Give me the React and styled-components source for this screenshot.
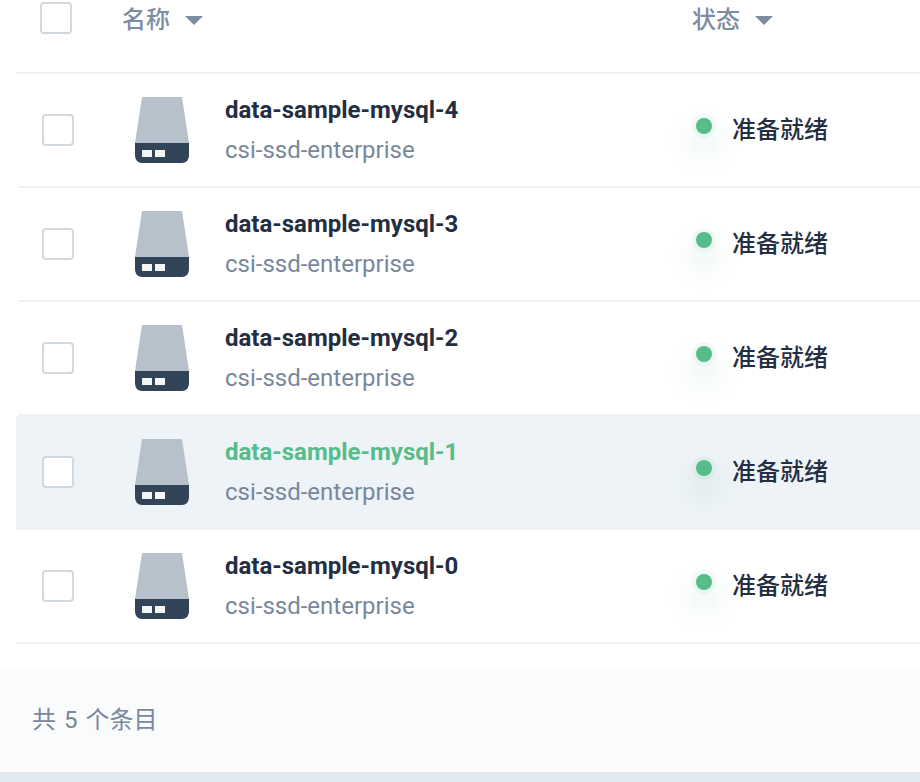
import React from 'react';
import styled, { createGlobalStyle } from 'styled-components';

const GlobalStyle = createGlobalStyle`
  html, body {
    margin: 0;
    padding: 0;
    background: #e3e9f0;
  }
  body {
    font-family: Roboto, "Noto Sans CJK SC", sans-serif;
  }
`;

const Page = styled.div`
  width: 920px;
  height: 782px;
  overflow: hidden;
  background: #e3e9f0;
`;

const Panel = styled.div`
  height: 772px;
  display: flex;
  flex-direction: column;
  background: #fff;
`;

const HeaderRow = styled.div`
  display: flex;
  height: 72px;
  margin-left: 16px;
  padding-left: 24px;
  border-bottom: 2px solid #eff3f7;
`;

const CheckBox = styled.div`
  box-sizing: border-box;
  flex: none;
  width: 32px;
  height: 32px;
  margin-top: ${(props) => (props.$head ? '2px' : '0')};
  border: 2px solid #d1d8e0;
  border-radius: 4px;
  background: #fff;
`;

const HeadCell = styled.div`
  display: flex;
  align-items: center;
  height: 41px;
  color: #7d8ca1;
  font-size: 24px;
  line-height: 41px;
  font-weight: 500;
`;

const NameHead = styled(HeadCell)`
  width: 570px;
  margin-left: 50px;
  margin-right: 0;
`;

const Caret = styled.span`
  width: 0;
  height: 0;
  margin-left: 15px;
  border-left: 9px solid transparent;
  border-right: 9px solid transparent;
  border-top: 9px solid #7d8ca1;
`;

const Row = styled.div`
  display: flex;
  align-items: center;
  box-sizing: border-box;
  height: 114px;
  margin-left: ${(props) => (props.$inset ? '18px' : '16px')};
  padding-left: ${(props) => (props.$inset ? '24px' : '26px')};
  border-bottom: 2px solid #eff3f7;
  background: ${(props) => (props.$active ? '#eef3f7' : 'transparent')};
  border-radius: ${(props) => (props.$active ? '2px' : '0')};
`;

const DiskWrap = styled.div`
  flex: none;
  width: 54px;
  height: 66px;
  margin-left: 61px;
`;

const NameCell = styled.div`
  flex: none;
  width: 471px;
  margin-left: 36px;
  display: flex;
  flex-direction: column;
  gap: 10px;
`;

const Name = styled.div`
  color: ${(props) => (props.$active ? '#55bc8a' : '#242e42')};
  font-size: 24px;
  font-weight: 700;
  line-height: 30px;
`;

const Sub = styled.div`
  color: #79879c;
  font-size: 24px;
  line-height: 30px;
`;

const Status = styled.div`
  display: flex;
  align-items: center;
  color: #242e42;
  font-size: 24px;
  line-height: 30px;
  font-weight: 500;
`;

const Dot = styled.span`
  flex: none;
  width: 16px;
  height: 16px;
  margin-right: 20px;
  margin-top: -8px;
  border-radius: 50%;
  background: #55bc8a;
  box-shadow: 0 0 0 4px rgba(85, 188, 138, 0.08), 0 16px 24px 6px rgba(85, 188, 138, 0.13);
`;

const Footer = styled.div`
  margin-top: 24px;
  flex: 1;
  display: flex;
  align-items: center;
  padding-left: 32px;
  background: #f9fbfd;
  color: #79879c;
  font-size: 24px;
  line-height: 30px;
  word-spacing: 2px;
`;

const DiskIcon = () => (
  <svg width="54" height="66" viewBox="0 0 54 66">
    <path d="M7 0H47L54 46H0Z" fill="#b6c1cc" />
    <path d="M0 46H54V58C54 63 51 66 47 66H7C3 66 0 63 0 58Z" fill="#324558" />
    <rect x="7" y="53" width="10" height="7" fill="#fff" opacity="0.95" />
    <rect x="20" y="53" width="10" height="7" fill="#fff" opacity="0.95" />
  </svg>
);

const volumes = [
  { name: 'data-sample-mysql-4', inset: true },
  { name: 'data-sample-mysql-3', inset: true },
  { name: 'data-sample-mysql-2', inset: true },
  { name: 'data-sample-mysql-1', active: true },
  { name: 'data-sample-mysql-0' },
];

const App = () => {
  return (
    <Page>
      <GlobalStyle />
      <Panel>
        <HeaderRow>
          <CheckBox $head />
          <NameHead>
            名称
            <Caret />
          </NameHead>
          <HeadCell>
            状态
            <Caret />
          </HeadCell>
        </HeaderRow>
        {volumes.map((v) => (
          <Row key={v.name} $inset={v.inset} $active={v.active}>
            <CheckBox />
            <DiskWrap>
              <DiskIcon />
            </DiskWrap>
            <NameCell>
              <Name $active={v.active}>{v.name}</Name>
              <Sub>csi-ssd-enterprise</Sub>
            </NameCell>
            <Status>
              <Dot />
              准备就绪
            </Status>
          </Row>
        ))}
        <Footer>共 5 个条目</Footer>
      </Panel>
    </Page>
  );
};

export default App;
